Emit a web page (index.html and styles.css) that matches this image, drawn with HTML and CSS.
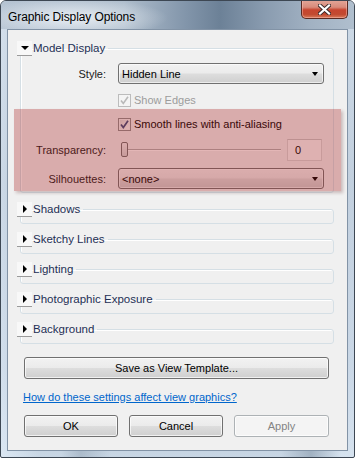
FILE: index.html
```html
<!DOCTYPE html>
<html>
<head>
<meta charset="utf-8">
<link rel="stylesheet" href="styles.css">
</head>
<body>
<div class="window">
  <div class="titlebar">
    <span class="title">Graphic Display Options</span>
    <div class="close">
      <svg width="13" height="11" viewBox="0 0 13 11">
        <path d="M2 1.5 L11 9.5 M11 1.5 L2 9.5" stroke="#3a2a2a" stroke-width="4" stroke-linecap="square" fill="none"/>
        <path d="M2 1.5 L11 9.5 M11 1.5 L2 9.5" stroke="#ffffff" stroke-width="2.2" stroke-linecap="square" fill="none"/>
      </svg>
    </div>
  </div>
  <div class="client">
    <fieldset class="group open">
      <legend><span class="toggle"><span class="tri-down"></span></span><span class="gtitle">Model Display</span></legend>
      <div class="form">
        <span class="label">Style:</span>
        <div class="combo"><span>Hidden Line</span><span class="arrow"></span></div>

        <span class="label"></span>
        <label class="check disabled"><span class="box"><svg width="11" height="11" viewBox="0 0 11 11"><path d="M2 5.5 L4.3 8.5 L9 1.8" stroke="#b9b9b9" stroke-width="1.6" fill="none"/></svg></span>Show Edges</label>

        <span class="label"></span>
        <label class="check"><span class="box"><svg width="11" height="11" viewBox="0 0 11 11"><path d="M2 5.5 L4.3 8.5 L9 1.8" stroke="#3b4d7e" stroke-width="1.7" fill="none"/></svg></span>Smooth lines with anti-aliasing</label>

        <span class="label">Transparency:</span>
        <div class="sliderrow">
          <div class="slider"><span class="track"></span><span class="thumb"></span></div>
          <div class="numbox">0</div>
        </div>

        <span class="label">Silhouettes:</span>
        <div class="combo"><span>&lt;none&gt;</span><span class="arrow"></span></div>
      </div>
    </fieldset>

    <fieldset class="group">
      <legend><span class="toggle"><span class="tri-right"></span></span><span class="gtitle">Shadows</span></legend>
    </fieldset>
    <fieldset class="group">
      <legend><span class="toggle"><span class="tri-right"></span></span><span class="gtitle">Sketchy Lines</span></legend>
    </fieldset>
    <fieldset class="group">
      <legend><span class="toggle"><span class="tri-right"></span></span><span class="gtitle">Lighting</span></legend>
    </fieldset>
    <fieldset class="group">
      <legend><span class="toggle"><span class="tri-right"></span></span><span class="gtitle">Photographic Exposure</span></legend>
    </fieldset>
    <fieldset class="group">
      <legend><span class="toggle"><span class="tri-right"></span></span><span class="gtitle">Background</span></legend>
    </fieldset>

    <div class="btn wide">Save as View Template...</div>
    <a class="help" href="#">How do these settings affect view graphics?</a>
    <div class="btnrow">
      <div class="btn">OK</div>
      <div class="btn">Cancel</div>
      <div class="btn disabled">Apply</div>
    </div>
  </div>
  <div class="highlight"></div>
</div>
</body>
</html>
```
FILE: styles.css
```css
html, body {
  margin: 0;
  padding: 0;
  background: #ffffff;
}
body {
  font-family: "Liberation Sans", Arial, sans-serif;
  font-size: 11px;
  color: #000;
}
.window {
  position: relative;
  box-sizing: border-box;
  width: 355px;
  height: 458px;
  border: 1px solid #3d4753;
  border-radius: 6px 6px 2px 2px;
  padding: 0 6px 6px 6px;
  display: flex;
  flex-direction: column;
  background:
    linear-gradient(90deg, rgba(235,245,255,0.55) 0, rgba(235,245,255,0) 40px, rgba(235,245,255,0) 60px, rgba(90,110,130,0.25) 80px, rgba(235,245,255,0) 110px, rgba(235,245,255,0) 280px, rgba(90,110,130,0.35) 310px, rgba(235,245,255,0.4) 340px),
    linear-gradient(180deg, #b9c7d6 0%, #a7b7c9 40%, #b4c4d6 80%, #c8d6e4 100%);
  overflow: hidden;
}
.titlebar {
  height: 28px;
  display: flex;
  align-items: flex-start;
  margin: 0 -6px;
  padding: 0 6px 0 7px;
  background:
    radial-gradient(ellipse 95px 20px at 72px 17px, rgba(235,240,245,0.95), rgba(235,240,245,0) 100%),
    linear-gradient(90deg, #b6c4d3 0%, #aebdcc 35%, #8396ab 52%, #6c8197 62%, #8a9cb0 75%, #a2b2c3 88%, #b0bfce 100%);
}
.title {
  font-size: 12px;
  line-height: 14px;
  margin-top: 9px;
  color: #000;
  letter-spacing: -0.1px;
}
.close {
  margin-left: auto;
  margin-top: -1px;
  width: 47px;
  height: 19px;
  box-sizing: border-box;
  border: 1px solid #5a2a22;
  border-top: none;
  border-radius: 0 0 5px 5px;
  background: linear-gradient(180deg, #e3a799 0%, #d88b7b 40%, #c7452f 55%, #c24a30 80%, #d97b5a 100%);
  box-shadow: inset 0 0 0 1px rgba(255,200,190,0.45);
  display: flex;
  align-items: center;
  justify-content: center;
}
.client {
  flex: 1;
  background: #f0f0f0;
  border: 1px solid #8293a6;
  padding: 11px 13px 0 12px;
  display: flex;
  flex-direction: column;
}
fieldset.group {
  margin: 0 0 8px 0;
  padding: 0 0 6px 0;
  border: 1px solid #d5dfe5;
  border-radius: 3px;
  box-shadow: inset 1px 1px 0 #ffffff;
  min-width: 0;
}
fieldset.group.open {
  padding-bottom: 3px;
  margin-bottom: 9px;
}
legend {
  padding: 0 3px 0 0;
  margin-left: -4px;
  display: flex;
  align-items: center;
  height: 15px;
}
.toggle {
  box-sizing: border-box;
  width: 15px;
  height: 15px;
  background: #f8f8f8;
  border-bottom: 1px solid #9a9a9a;
  display: flex;
  align-items: center;
  justify-content: center;
  margin-right: 1px;
}
.tri-down {
  width: 0;
  height: 0;
  border-left: 4px solid transparent;
  border-right: 4px solid transparent;
  border-top: 4px solid #000;
}
.tri-right {
  width: 0;
  height: 0;
  border-top: 4px solid transparent;
  border-bottom: 4px solid transparent;
  border-left: 4px solid #000;
  margin-left: 1px;
}
.gtitle {
  color: #1e2f55;
  font-size: 11.5px;
  line-height: 15px;
}
.form {
  display: grid;
  grid-template-columns: 85px 206px;
  grid-template-rows: 21px 18px 16px 22px 21px;
  column-gap: 12px;
  row-gap: 7px;
  padding-top: 7px;
}
.label {
  text-align: right;
  align-self: center;
  color: #1a1a1a;
}
.combo {
  box-sizing: border-box;
  height: 21px;
  border: 1px solid #707070;
  border-radius: 3px;
  background: linear-gradient(180deg, #f2f2f2 0%, #ebebeb 48%, #dddddd 52%, #cfcfcf 100%);
  box-shadow: inset 0 0 0 1px rgba(255,255,255,0.6);
  display: flex;
  align-items: center;
  padding: 0 5px 0 3px;
}
.combo span:first-child {
  flex: 1;
}
.arrow {
  width: 0;
  height: 0;
  border-left: 3.5px solid transparent;
  border-right: 3.5px solid transparent;
  border-top: 4px solid #000;
}
.check {
  display: flex;
  align-items: center;
  gap: 3px;
}
.check.disabled {
  color: #9c9c9c;
}
.box {
  box-sizing: border-box;
  width: 13px;
  height: 13px;
  border: 1px solid #8e8f8f;
  background: linear-gradient(135deg, #dcdcdc 0%, #ffffff 100%);
  box-shadow: inset 0 0 0 1px #f4f4f4;
  display: flex;
  align-items: center;
  justify-content: center;
}
.check.disabled .box {
  border-color: #bcbcbc;
  background: #f4f4f4;
}
.sliderrow {
  display: flex;
  align-items: center;
  gap: 6px;
  padding-right: 2px;
}
.slider {
  flex: 1;
  position: relative;
  height: 22px;
  display: flex;
  align-items: center;
  padding: 0 0 0 3px;
}
.track {
  flex: 1;
  height: 1px;
  background: #b0b0b0;
  border-bottom: 1px solid #ffffff;
}
.thumb {
  position: absolute;
  left: 3px;
  top: 3px;
  width: 7px;
  height: 15px;
  box-sizing: border-box;
  border: 1px solid #707070;
  border-radius: 2px;
  background: linear-gradient(180deg, #f2f2f2, #d6d6d6);
}
.numbox {
  box-sizing: border-box;
  width: 35px;
  height: 22px;
  border: 1px solid #d8d8d8;
  border-top-color: #c8c8c8;
  background: #f8f8f8;
  padding-left: 7px;
  line-height: 20px;
}
.btn {
  box-sizing: border-box;
  height: 22px;
  border: 1px solid #707070;
  border-radius: 3px;
  background: linear-gradient(180deg, #f2f2f2 0%, #ebebeb 48%, #dddddd 52%, #cfcfcf 100%);
  box-shadow: inset 0 0 0 1px rgba(255,255,255,0.7);
  display: flex;
  align-items: center;
  justify-content: center;
  color: #000;
}
.btn.wide {
  margin: 5px 5px 0 4px;
}
.btn.disabled {
  border-color: #adb2b5;
  background: #f4f4f4;
  color: #838383;
}
.help {
  margin: 11px 0 0 3px;
  color: #0066cc;
  text-decoration: underline;
  line-height: 14px;
}
.btnrow {
  display: grid;
  grid-template-columns: 94px 94px 95px;
  column-gap: 11px;
  margin: 11px 5px 0 4px;
}
.highlight {
  position: absolute;
  left: 13px;
  top: 108px;
  width: 327px;
  height: 82px;
  background: rgba(168, 28, 28, 0.32);
  box-shadow: 2px 2px 3px rgba(90, 30, 30, 0.25);
  pointer-events: none;
}
```
